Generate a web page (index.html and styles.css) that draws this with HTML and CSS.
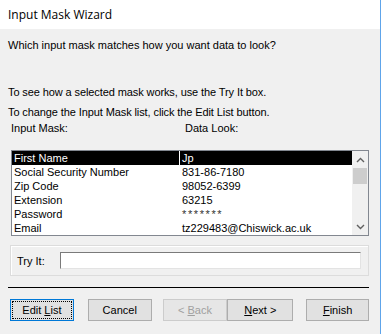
FILE: index.html
```html
<!DOCTYPE html>
<html>
<head>
  <title>Input Mask Wizard</title>
  <link rel="stylesheet" href="styles.css">
</head>
<body>
  <div class="window">
    <div class="titlebar">Input Mask Wizard</div>
    <div class="main">
      <p class="question">Which input mask matches how you want data to look?</p>
      <p class="hint first">To see how a selected mask works, use the Try It box.</p>
      <p class="hint">To change the Input Mask list, click the Edit List button.</p>
      <div class="labels">
        <span class="label-mask">Input Mask:</span>
        <span class="label-look">Data Look:</span>
      </div>
      <div class="listbox">
        <div class="rows">
          <div class="row selected"><span class="cell name">First Name</span><span class="cell look">Jp</span></div>
          <div class="row"><span class="cell name">Social Security Number</span><span class="cell look">831-86-7180</span></div>
          <div class="row"><span class="cell name">Zip Code</span><span class="cell look">98052-6399</span></div>
          <div class="row"><span class="cell name">Extension</span><span class="cell look">63215</span></div>
          <div class="row"><span class="cell name">Password</span><span class="cell look stars">*******</span></div>
          <div class="row"><span class="cell name">Email</span><span class="cell look">tz229483@Chiswick.ac.uk</span></div>
        </div>
        <div class="scrollbar">
          <div class="arrow">
            <svg width="9" height="6" viewBox="0 0 9 6"><path d="M1 5 L4.5 1.5 L8 5" fill="none" stroke="#606060" stroke-width="1.4"/></svg>
          </div>
          <div class="thumb"></div>
          <div class="track"></div>
          <div class="arrow">
            <svg width="9" height="6" viewBox="0 0 9 6"><path d="M1 1 L4.5 4.5 L8 1" fill="none" stroke="#606060" stroke-width="1.4"/></svg>
          </div>
        </div>
      </div>
      <div class="tryit">
        <span class="tryit-label">Try It:</span>
        <div class="tryit-input"></div>
      </div>
      <div class="divider"></div>
      <div class="buttons">
        <button class="btn focused"><span class="focus-ring">Edit <u>L</u>ist</span></button>
        <button class="btn cancel">Cancel</button>
        <button class="btn back" disabled>&lt; <u>B</u>ack</button>
        <button class="btn next"><u>N</u>ext &gt;</button>
        <button class="btn finish"><u>F</u>inish</button>
      </div>
    </div>
  </div>
</body>
</html>
```

FILE: styles.css
```css
body {
  margin: 0;
  background: #ffffff;
  font-family: "Liberation Sans", Arial, sans-serif;
  font-size: 11px;
  color: #000;
}
.window {
  width: 380px;
  height: 334px;
  background: #f0f0f0;
  border-right: 1px solid #5ea4ea;
}
.titlebar {
  height: 29px;
  line-height: 29px;
  padding-left: 8px;
  background: #ffffff;
  font-family: "Open Sans", sans-serif;
  font-size: 12px;
}
.main {
  padding: 0 11px 0 8px;
}
p {
  margin: 0;
  line-height: 13px;
}
.question {
  padding-top: 10px;
}
.hint {
  margin-top: 7px;
  letter-spacing: -0.1px;
}
.hint.first {
  margin-top: 34px;
}
.labels {
  display: flex;
  margin-top: 3px;
  line-height: 13px;
}
.label-mask {
  padding-left: 3px;
  width: 174px;
}
.listbox {
  display: flex;
  margin: 15px 0 0 3px;
  height: 84px;
  border: 1px solid #828790;
  background: #ffffff;
}
.rows {
  flex: 1;
}
.row {
  display: flex;
  height: 14px;
  line-height: 14px;
}
.cell {
  padding-left: 2px;
  white-space: nowrap;
}
.name {
  width: 165px;
  border-right: 1px solid #ffffff;
}
.stars {
  letter-spacing: 1.6px;
  color: #333;
}
.row.selected {
  background: #000000;
  color: #ffffff;
}
.scrollbar {
  width: 16px;
  display: flex;
  flex-direction: column;
  background: #f0f0f0;
}
.arrow {
  height: 17px;
  display: flex;
  align-items: center;
  justify-content: center;
}
.thumb {
  height: 16px;
  margin: 0 1px;
  background: #cdcdcd;
}
.track {
  flex: 1;
}
.tryit {
  display: flex;
  align-items: center;
  margin: 9px 0 0 2px;
  height: 29px;
  border: 1px solid #dcdcdc;
  box-shadow: inset 1px 1px 0 #ffffff;
}
.tryit-label {
  width: 43px;
  padding-left: 6px;
}
.tryit-input {
  width: 299px;
  height: 15px;
  background: #ffffff;
  border: 1px solid #7a7a7a;
  border-right-color: #e3e3e3;
  border-bottom-color: #e3e3e3;
}
.divider {
  margin-top: 11px;
  height: 1px;
  background: #000000;
}
.buttons {
  display: flex;
  margin-top: 11px;
  padding-left: 2px;
}
.btn {
  height: 22px;
  padding: 0;
  background: #e1e1e1;
  border: 1px solid #adadad;
  font-family: "Liberation Sans", Arial, sans-serif;
  font-size: 11px;
  color: #000;
}
.focused {
  width: 64px;
  border-color: #0078d7;
  padding: 1px;
}
.focus-ring {
  display: block;
  height: 16px;
  line-height: 16px;
  border: 1px dotted #000;
}
.cancel {
  width: 64px;
  margin-left: 14px;
}
.back {
  width: 65px;
  margin-left: 11px;
  color: #a0a0a0;
  border-color: #cccccc;
  background: #e6e6e6;
}
.next {
  width: 66px;
}
.finish {
  width: 63px;
  margin-left: 13px;
}
```
